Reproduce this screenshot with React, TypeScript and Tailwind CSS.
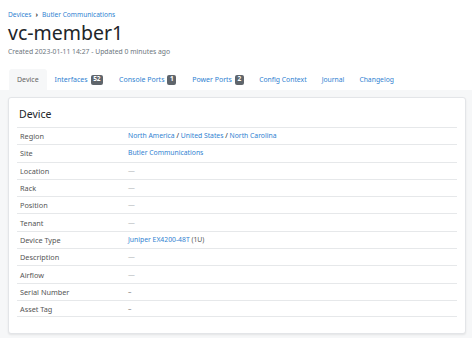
import React from "react";

const Badge = ({ n }: { n: string }) => (
  <span className="ml-[3px] inline-flex h-[10px] items-center rounded-[2px] bg-[#5f656b] px-[2.5px] text-[6.5px] font-bold leading-none text-white">
    {n}
  </span>
);

const Dash = () => <span className="text-[#b5b9bd]">—</span>;

const rows: { label: string; value: React.ReactNode }[] = [
  {
    label: "Region",
    value: (
      <span>
        <a className="text-[#2f7fd1]">North America</a>
        <span className="text-[#212529]"> / </span>
        <a className="text-[#2f7fd1]">United States</a>
        <span className="text-[#212529]"> / </span>
        <a className="text-[#2f7fd1]">North Carolina</a>
      </span>
    ),
  },
  { label: "Site", value: <a className="text-[#2f7fd1]">Butler Communications</a> },
  { label: "Location", value: <Dash /> },
  { label: "Rack", value: <Dash /> },
  { label: "Position", value: <Dash /> },
  { label: "Tenant", value: <Dash /> },
  {
    label: "Device Type",
    value: (
      <span>
        <a className="text-[#2f7fd1]">Juniper EX4200-48T</a>
        <span className="text-[#555]"> (1U)</span>
      </span>
    ),
  },
  { label: "Description", value: <Dash /> },
  { label: "Airflow", value: <Dash /> },
  { label: "Serial Number", value: <span className="text-[#777]">–</span> },
  { label: "Asset Tag", value: <span className="text-[#777]">–</span> },
];

export default function App() {
  return (
    <div
      className="h-[338px] w-[474px] overflow-hidden bg-white text-[#212529]"
      style={{ fontFamily: '"Noto Sans", "Open Sans", sans-serif' }}
    >
      <div className="px-2 pt-[10px]">
        <div className="flex h-[10px] items-center text-[6.6px] leading-[10px] text-[#2f7fd1]">
          <span>Devices</span>
          <span className="mx-[4px] text-[7px] font-bold text-[#333]">›</span>
          <span>Butler Communications</span>
        </div>
        <div className="mt-[1px] text-[19.5px] leading-[24px] text-[#212529]">vc-member1</div>
        <div className="mt-[2px] text-[6.8px] leading-[10px] text-[#6c757d]">
          Created 2023-01-11 14:27 - Updated 0 minutes ago
        </div>
      </div>
      <div className="mt-[12px] flex px-[9px] text-[7px] leading-[10px]">
        <div className="flex h-[21px] items-center rounded-t-[3px] bg-[#f6f7f8] px-[8px] text-[#666]">
          Device
        </div>
        <div className="flex h-[21px] items-center px-[8px] text-[#2f7fd1]">
          Interfaces<Badge n="52" />
        </div>
        <div className="flex h-[21px] items-center px-[8px] text-[#2f7fd1]">
          Console Ports<Badge n="1" />
        </div>
        <div className="flex h-[21px] items-center px-[8px] text-[#2f7fd1]">
          Power Ports<Badge n="2" />
        </div>
        <div className="flex h-[21px] items-center px-[7.5px] text-[6.8px] text-[#2f7fd1]">Config Context</div>
        <div className="flex h-[21px] items-center px-[7.5px] text-[6.8px] text-[#2f7fd1]">Journal</div>
        <div className="flex h-[21px] items-center px-[7.5px] text-[6.8px] text-[#2f7fd1]">Changelog</div>
      </div>
      <div className="mr-[2px] bg-[#f6f7f8] pb-[5px] pl-[8px] pr-[6px] pt-[7px]">
        <div className="rounded-[3px] border border-[#e3e5e8] bg-white px-[8px] pb-[16px] shadow-[0_1px_2px_rgba(0,0,0,0.08)]">
          <div className="pl-[2px] pb-[6px] pt-[9px] text-[10.5px] leading-[14px] text-[#212529]">Device</div>
          <div>
            {rows.map((r) => (
              <div
                key={r.label}
                className="flex h-[17.3px] items-center border-t border-[#e6e8ea] leading-[10px] last:border-b"
              >
                <div className="w-[111px] shrink-0 pl-[3px] text-[7.3px] text-[#555]">{r.label}</div>
                <div className="text-[6.8px]">{r.value}</div>
              </div>
            ))}
          </div>
        </div>
      </div>
    </div>
  );
}
